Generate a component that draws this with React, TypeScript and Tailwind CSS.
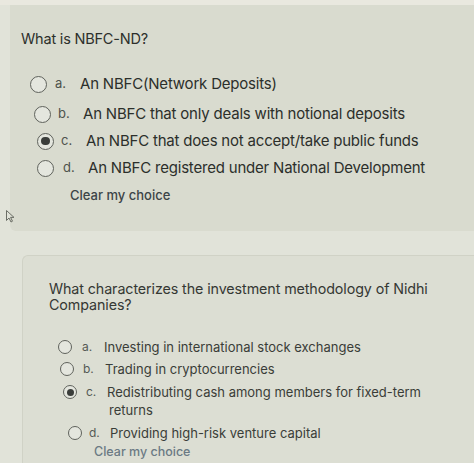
import React from "react";

type Option = {
  letter: string;
  text: string[];
  checked?: boolean;
  radioX: number;
  letterX: number;
  textX: number;
  mt?: number;
};

// x values are absolute page positions; converted into margins below
const q1: Option[] = [
  { letter: "a.", text: ["An NBFC(Network Deposits)"], radioX: 30, letterX: 55, textX: 80 },
  { letter: "b.", text: ["An NBFC that only deals with notional deposits"], radioX: 34, letterX: 58, textX: 83, mt: 3 },
  { letter: "c.", text: ["An NBFC that does not accept/take public funds"], checked: true, radioX: 37, letterX: 61, textX: 86 },
  { letter: "d.", text: ["An NBFC registered under National Development"], radioX: 37, letterX: 63, textX: 88 },
];

const q2: Option[] = [
  { letter: "a.", text: ["Investing in international stock exchanges"], radioX: 58, letterX: 82, textX: 104 },
  { letter: "b.", text: ["Trading in cryptocurrencies"], radioX: 60, letterX: 83, textX: 105 },
  { letter: "c.", text: ["Redistributing cash among members for fixed-term", "returns"], checked: true, radioX: 63, letterX: 86, textX: 107, mt: 1 },
  { letter: "d.", text: ["Providing high-risk venture capital"], radioX: 68, letterX: 89, textX: 110, mt: 1 },
];

function Radio({ checked, size }: { checked?: boolean; size: number }) {
  return (
    <span
      className="flex shrink-0 items-center justify-center rounded-full border-[1.5px] border-[#5f625c] bg-[#e4e6de]"
      style={{ width: size, height: size }}
    >
      {checked && <span className="rounded-full bg-[#3a3d3a]" style={{ width: size * 0.5, height: size * 0.5 }} />}
    </span>
  );
}

function Row({ o, left, size, letterCls, textCls }: { o: Option; left: number; size: number; letterCls: string; textCls: string }) {
  return (
    <div style={{ paddingLeft: o.radioX - left, marginTop: o.mt ?? 0 }}>
      <div className="flex items-center">
        <Radio checked={o.checked} size={size} />
        <span className={`shrink-0 ${letterCls}`} style={{ marginLeft: o.letterX - o.radioX - size, width: o.textX - o.letterX }}>
          {o.letter}
        </span>
        <span className={textCls}>{o.text[0]}</span>
      </div>
      {o.text[1] && (
        <div className={textCls} style={{ paddingLeft: o.textX - o.radioX + 2 }}>
          {o.text[1]}
        </div>
      )}
    </div>
  );
}

export default function App() {
  return (
    <div className="h-[463px] w-[474px] overflow-hidden bg-[#e1e3d9] font-['Inter',sans-serif] text-[#2c2f2b]">
      <div className="h-[5px] bg-[#e9e8df]" />

      {/* Question 1 */}
      <div className="relative ml-[10px] h-[226px] rounded-bl-md bg-[#d9dbcf] pl-[11px] pt-[24px]">
        <h2 className="text-[14.5px] leading-5 tracking-[-0.2px]">What is NBFC-ND?</h2>
        <div className="mt-[25px] flex flex-col gap-[7px]">
          {q1.map((o) => (
            <Row
              key={o.letter}
              o={o}
              left={21}
              size={17}
              letterCls="text-[13px] text-[#4e524c]"
              textCls="text-[15px] leading-5 tracking-[-0.2px]"
            />
          ))}
        </div>
        <div className="mt-[8px] pl-[49px] text-[13px] font-medium text-[#3c4447]">Clear my choice</div>
        <svg className="absolute left-[-5px] top-[204px]" width="12" height="14" viewBox="0 0 12 14">
          <path d="M1.5 1.5 L1.5 11.5 L4 9 L6 13 L7.5 12.2 L5.6 8.4 L9 8.4 Z" fill="none" stroke="#6b6e66" strokeWidth="1" />
        </svg>
      </div>

      {/* Question 2 */}
      <div className="ml-[22px] mt-[24px] h-[220px] rounded-tl-md border-l border-t border-[#d0d2c6] bg-[#dcded3] pl-[26px] pt-[25px]">
        <h2 className="w-[400px] text-[14.3px] leading-[16px] tracking-[-0.1px] text-[#353833]">
          What characterizes the investment methodology of Nidhi
          <br />
          Companies?
        </h2>
        <div className="mt-[25px] flex flex-col gap-[4px]">
          {q2.map((o) => (
            <Row
              key={o.letter}
              o={o}
              left={49}
              size={14}
              letterCls="text-[12px] text-[#555a55]"
              textCls="text-[13px] leading-[18px] text-[#3a3d38]"
            />
          ))}
        </div>
        <div className="mt-[2px] pl-[45px] text-[12.5px] font-medium leading-[16px] text-[#6b7a84]">Clear my choice</div>
      </div>
    </div>
  );
}
